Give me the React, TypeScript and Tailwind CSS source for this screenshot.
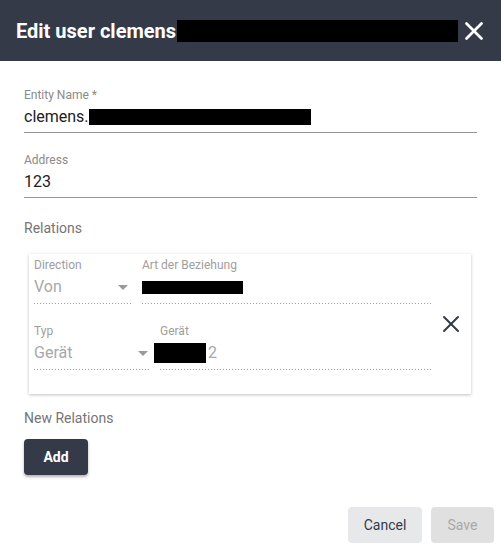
import { X } from "lucide-react"

function Field({ label, children }: { label: string; children: React.ReactNode }) {
  return (
    <div className="flex flex-col">
      <span className="text-xs leading-4 text-[#8a8a8a]">{label}</span>
      <div className="mt-[2px] flex h-6 items-center border-b border-[#949494] pb-[3px] box-content text-base text-[#212121]">
        {children}
      </div>
    </div>
  )
}

function Dotted() {
  return <div className="h-px w-full bg-[linear-gradient(to_right,#9e9e9e_1px,transparent_1px)] bg-[length:3px_1px] bg-repeat-x" />
}

function SelectField({ label, value, width }: { label: string; value: string; width: string }) {
  return (
    <div className={`flex flex-col ${width}`}>
      <span className="text-xs leading-4 text-[#9e9e9e]">{label}</span>
      <div className="mt-[2px] flex h-6 items-center justify-between pr-[2px] text-base text-[#a8a8a8]">
        <span>{value}</span>
        <svg width="10" height="5" viewBox="0 0 10 5" className="mr-[1px]">
          <path d="M0 0h10L5 5z" fill="#9a9a9a" />
        </svg>
      </div>
      <div className="mt-[4px]">
        <Dotted />
      </div>
    </div>
  )
}

export default function App() {
  return (
    <div className="flex h-[550px] w-[501px] flex-col bg-white font-['Roboto',sans-serif]">
      {/* Header */}
      <div className="flex h-[61px] items-center justify-between bg-[#353a49] pl-4 pr-3">
        <div className="flex items-center">
          <span className="text-xl font-bold text-white">Edit user clemens</span>
          <span className="ml-[1px] h-[22px] w-[281px] bg-black" />
        </div>
        <X className="h-[30px] w-[30px] text-white" strokeWidth={2.2} />
      </div>

      {/* Body */}
      <div className="flex flex-1 flex-col px-6 pt-[26px]">
        <Field label="Entity Name *">
          <span>clemens.</span>
          <span className="h-4 w-[222px] bg-black" />
        </Field>

        <div className="mt-[19px]">
          <Field label="Address">
            <span>123</span>
          </Field>
        </div>

        <span className="mt-[20px] text-sm leading-5 text-[#757575]">Relations</span>

        {/* Relation card */}
        <div className="ml-[5px] mr-[6px] mt-[16px] flex h-[140px] items-start justify-between bg-white pl-[5px] pr-[6px] pt-[3px] shadow-[0_1px_3px_rgba(0,0,0,0.25)]">
          <div className="flex flex-col gap-[19px]">
            <div className="flex gap-[11px]">
              <SelectField label="Direction" value="Von" width="w-[97px]" />
              <div className="flex w-[289px] flex-col">
                <span className="text-xs leading-4 text-[#9e9e9e]">Art der Beziehung</span>
                <div className="mt-[2px] flex h-6 items-center">
                  <span className="h-[13px] w-[101px] bg-black" />
                </div>
                <div className="mt-[4px]">
                  <Dotted />
                </div>
              </div>
            </div>
            <div className="flex gap-[9px]">
              <SelectField label="Typ" value="Gerät" width="w-[117px]" />
              <div className="flex w-[273px] flex-col">
                <span className="text-xs leading-4 text-[#9e9e9e]">Gerät</span>
                <div className="mt-[2px] flex h-6 items-center text-base text-[#a8a8a8]">
                  <span className="ml-[-6px] h-5 w-[52px] bg-black" />
                  <span className="ml-[2px]">2</span>
                </div>
                <div className="mt-[4px]">
                  <Dotted />
                </div>
              </div>
            </div>
          </div>
          <X className="mt-[53px] h-[28px] w-[28px] text-[#353a49]" strokeWidth={1.7} />
        </div>

        <span className="mt-[14px] text-sm leading-5 text-[#757575]">New Relations</span>

        <button className="mt-[11px] flex h-9 w-16 items-center justify-center rounded bg-[#353a49] text-sm font-bold text-white shadow-[0_2px_3px_rgba(0,0,0,0.3)]">
          Add
        </button>

        {/* Footer */}
        <div className="mt-[32px] mr-[-17px] flex justify-end gap-[9px]">
          <button className="h-9 w-[74px] rounded bg-[#e7e8ea] text-sm text-[#353a49]">Cancel</button>
          <button className="h-9 w-[63px] rounded bg-[#e0e0e0] text-sm text-[#a8a8a8]">Save</button>
        </div>
      </div>
    </div>
  )
}
